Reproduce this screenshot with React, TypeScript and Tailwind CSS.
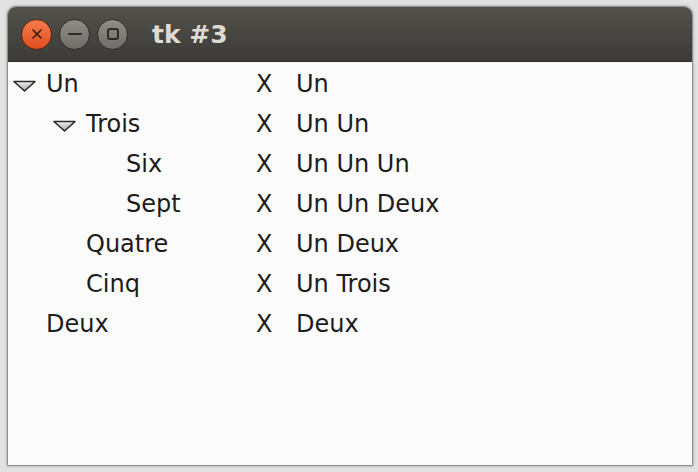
import React from "react";

type Row = { label: string; depth: number; open?: boolean; x: string; val: string };

const rows: Row[] = [
  { label: "Un", depth: 0, open: true, x: "X", val: "Un" },
  { label: "Trois", depth: 1, open: true, x: "X", val: "Un Un" },
  { label: "Six", depth: 2, x: "X", val: "Un Un Un" },
  { label: "Sept", depth: 2, x: "X", val: "Un Un Deux" },
  { label: "Quatre", depth: 1, x: "X", val: "Un Deux" },
  { label: "Cinq", depth: 1, x: "X", val: "Un Trois" },
  { label: "Deux", depth: 0, x: "X", val: "Deux" },
];

function Tri() {
  return (
    <svg width="23" height="12" viewBox="0 0 23 12" className="block">
      <defs>
        <linearGradient id="tg" x1="0" y1="0" x2="0" y2="1">
          <stop offset="0" stopColor="#efefef" />
          <stop offset="1" stopColor="#a9a9a9" />
        </linearGradient>
      </defs>
      <polygon points="1,1.5 22,1.5 11.5,11" fill="url(#tg)" stroke="#2a2a2a" strokeWidth="1.6" strokeLinejoin="round" />
    </svg>
  );
}

const padFor = ["pl-0", "pl-[40px]", "pl-[80px]"];

export default function App() {
  return (
    <div className="w-[698px] h-[472px] bg-[#e2e2e2] pl-[7px] pt-[6px] pr-[5px] pb-[6px]">
      <div className="w-full h-full flex flex-col rounded-t-[9px] border border-[#8e8e8e] shadow-[0_0_3px_rgba(0,0,0,0.35)] overflow-hidden">
        <div className="h-[55px] shrink-0 bg-gradient-to-b from-[#52514c] to-[#3c3b37] border-b border-[#2e2d2a] flex items-center pl-[13px]">
          <div className="flex items-center gap-[7px]">
            <div className="w-[31px] h-[31px] rounded-full bg-gradient-to-b from-[#f57a4a] to-[#df4e1c] border border-[#5a2410] flex items-center justify-center">
              <svg width="12" height="12" viewBox="0 0 12 12">
                <path d="M2 2 L10 10 M10 2 L2 10" stroke="#3b1a0c" strokeWidth="1.6" strokeLinecap="round" />
              </svg>
            </div>
            <div className="w-[31px] h-[31px] rounded-full bg-gradient-to-b from-[#8f8e88] to-[#6e6d68] border border-[#2e2d2a] flex items-center justify-center">
              <svg width="14" height="4" viewBox="0 0 14 4">
                <path d="M1 2 L13 2" stroke="#2c2b28" strokeWidth="2" strokeLinecap="round" />
              </svg>
            </div>
            <div className="w-[31px] h-[31px] rounded-full bg-gradient-to-b from-[#8f8e88] to-[#6e6d68] border border-[#2e2d2a] flex items-center justify-center">
              <svg width="14" height="14" viewBox="0 0 14 14">
                <rect x="2" y="2" width="10" height="10" rx="2" fill="none" stroke="#2c2b28" strokeWidth="2" />
              </svg>
            </div>
          </div>
          <div className="ml-[24px] text-[25px] font-bold text-[#dfdbd2] leading-none" style={{ fontFamily: '"DejaVu Sans", sans-serif' }}>
            tk #3
          </div>
        </div>
        <div className="flex-1 bg-[#fbfbfb] pt-[2px] text-[24px] text-[#1c1c1c]" style={{ fontFamily: '"DejaVu Sans", sans-serif' }}>
          {rows.map((r, i) => (
            <div key={i} className="h-[40px] flex items-center">
              <div className={`w-[241px] flex items-center ${padFor[r.depth]}`}>
                <div className="w-[38px] flex items-center pl-[5px] pt-[3px]">{r.open ? <Tri /> : null}</div>
                <span className="leading-none">{r.label}</span>
              </div>
              <div className="w-[40px] pl-[7px] leading-none">{r.x}</div>
              <div className="pl-[7px] leading-none">{r.val}</div>
            </div>
          ))}
        </div>
      </div>
    </div>
  );
}
